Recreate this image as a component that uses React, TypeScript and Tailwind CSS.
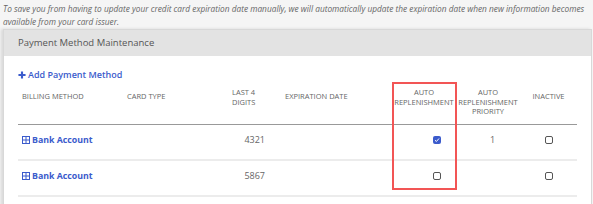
import React from "react";

type Row = { last4: string; auto: boolean; priority: string; inactive: boolean };

const rows: Row[] = [
  { last4: "4321", auto: true, priority: "1", inactive: false },
  { last4: "5867", auto: false, priority: "", inactive: false },
];

const cols = "grid grid-cols-[104px_105px_54px_111px_64px_64px_57px]";

function Checkbox({ checked }: { checked: boolean }) {
  if (checked) {
    return (
      <span className="inline-flex w-[8px] h-[8px] rounded-[2px] bg-[#3b5bcc] items-center justify-center">
        <svg width="6" height="6" viewBox="0 0 6 6" fill="none">
          <path d="M1 3.2 L2.4 4.5 L5 1.5" stroke="white" strokeWidth="1" />
        </svg>
      </span>
    );
  }
  return <span className="inline-block w-[8px] h-[8px] rounded-[2px] border border-[#555] bg-white" />;
}

function ExpandIcon() {
  return (
    <svg width="8" height="8" viewBox="0 0 8 8" fill="none" className="shrink-0">
      <rect x="0.5" y="0.5" width="7" height="7" stroke="#3b5bcc" strokeWidth="1" />
      <path d="M4 1 V7 M1 4 H7" stroke="#3b5bcc" strokeWidth="1" />
    </svg>
  );
}

export default function App() {
  return (
    <div
      className="relative w-[593px] h-[204px] overflow-hidden bg-[#f5f5f5]"
      style={{ fontFamily: '"Open Sans", "Liberation Sans", sans-serif' }}
    >
      <p className="px-[3px] pt-[2px] text-[8.3px] italic leading-[13px] text-[#666]">
        To save you from having to update your credit card expiration date manually, we will automatically update the
        expiration date when new information becomes available from your card issuer.
      </p>

      <div className="mt-[1px] ml-[3px] w-[589px] bg-white border border-[#d8d8d8] shadow-[-2px_0_3px_rgba(0,0,0,0.12)]">
        <div className="h-[26px] bg-[#e3e3e3] pl-[14px] flex items-center text-[9.5px] text-[#555]">
          Payment Method Maintenance
        </div>

        <div className="px-[14px] pt-[12px] pb-[20px]">
          <div className="flex items-center gap-[2px] text-[9px] font-semibold leading-[13px] text-[#3b5bcc]">
            <svg width="8" height="8" viewBox="0 0 9 9">
              <path d="M3.3 0.5 H5.7 V3.3 H8.5 V5.7 H5.7 V8.5 H3.3 V5.7 H0.5 V3.3 H3.3 Z" fill="#3b5bcc" />
            </svg>
            Add Payment Method
          </div>

          <div
            className={`${cols} mt-[1px] h-[43px] border-b border-[#999] text-[7.5px] leading-[9.5px] text-[#666] uppercase`}
          >
            <div className="pl-[4px] pt-[10px]">Billing Method</div>
            <div className="pl-[5px] pt-[10px]">Card Type</div>
            <div className="pl-[5px] pt-[6px]">
              Last 4<br />Digits
            </div>
            <div className="pl-[4px] pt-[10px]">Expiration Date</div>
            <div className="pt-[6px] text-center">
              Auto<br />Replenishment
            </div>
            <div className="pt-[6px] text-center">
              Auto<br />Replenishment<br />Priority
            </div>
            <div className="pt-[10px] text-center">Inactive</div>
          </div>

          {rows.map((r) => (
            <div
              key={r.last4}
              className={`${cols} h-[36px] border-b-2 border-[#ececec] text-[9px] text-[#666] leading-[12px]`}
            >
              <div className="pl-[4px] pt-[9px] flex items-center gap-[2px] h-[21px]">
                <ExpandIcon />
                <span className="text-[8.8px] font-bold text-[#3b5bcc]">Bank Account</span>
              </div>
              <div />
              <div className="pt-[9px] pr-[16px] flex justify-end h-[21px]">{r.last4}</div>
              <div />
              <div className="pt-[9px] pr-[15px] flex items-center justify-end h-[21px]">
                <Checkbox checked={r.auto} />
              </div>
              <div className="pt-[9px] pl-[34px] h-[21px]">{r.priority}</div>
              <div className="pt-[9px] flex items-center justify-center h-[21px]">
                <Checkbox checked={r.inactive} />
              </div>
            </div>
          ))}
        </div>
      </div>

      <div className="absolute left-[392px] top-[82px] w-[65px] h-[108px] border-2 border-[#f25555]" />
    </div>
  );
}
